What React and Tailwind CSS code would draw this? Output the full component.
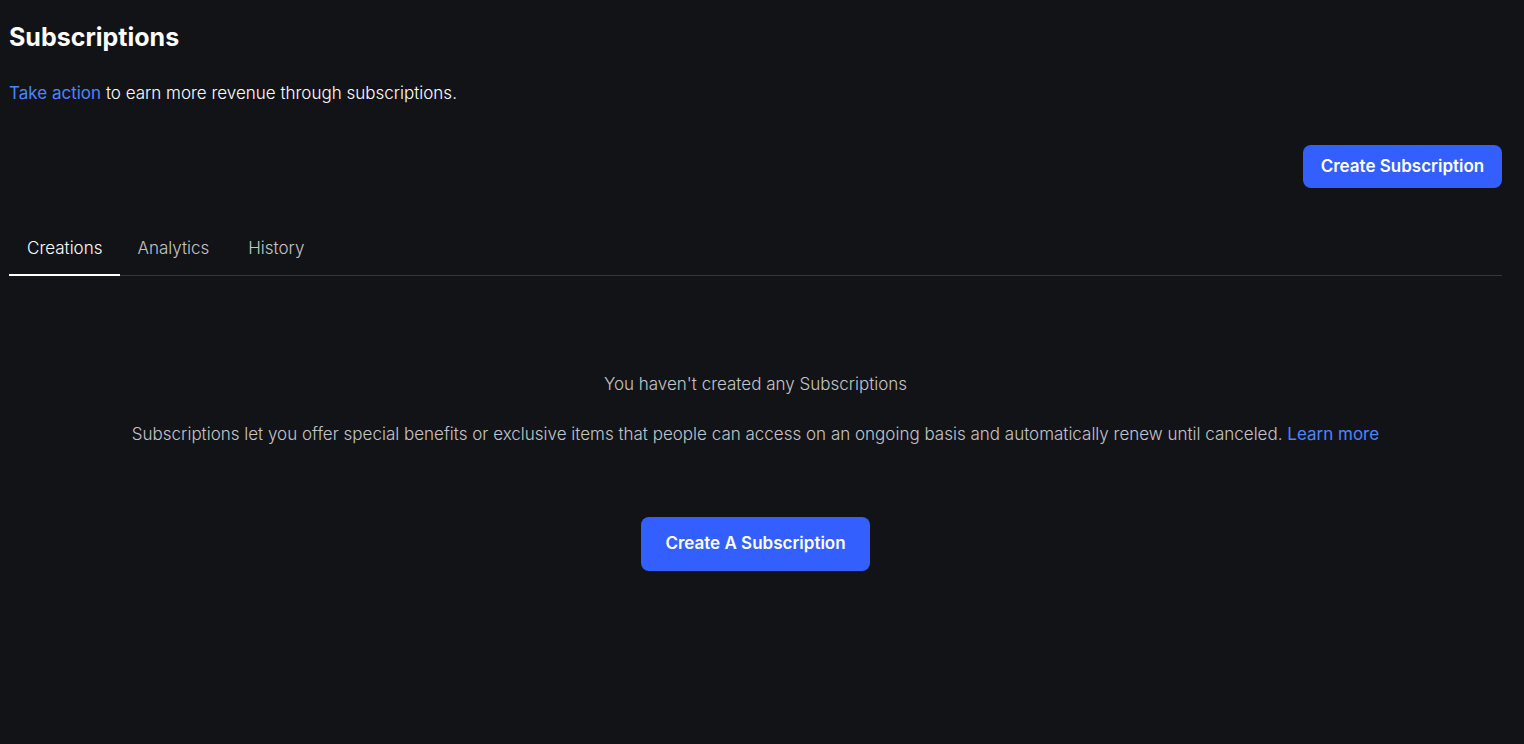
export default function App() {
  const font = { fontFamily: 'Inter, "Noto Sans", sans-serif' };
  return (
    <div className="min-h-[744px] w-full bg-[#121317] text-white" style={font}>
      <div className="pl-[9px] pr-[22px] pt-[21px]">
        <h1 className="text-[25px] leading-[32px] font-bold">Subscriptions</h1>
        <p className="mt-[28px] text-[17px] leading-[24px] font-light text-white">
          <a className="text-[#4a86ff] font-normal cursor-pointer">Take action</a> to earn more revenue through subscriptions.
        </p>
        <div className="mt-[40px] flex justify-end">
          <button className="h-[43px] w-[199px] rounded-[8px] bg-[#335fff] text-[17px] font-semibold text-white">
            Create Subscription
          </button>
        </div>
        <div className="mt-[48px] flex border-b border-[#34363b]">
          <div className="relative px-[18px] pb-[15px] text-[17px] leading-[24px] font-light text-white">
            Creations
            <span className="absolute left-0 right-0 -bottom-px h-[2px] bg-white" />
          </div>
          <div className="pl-[17px] pr-[19px] pb-[15px] text-[17px] leading-[24px] font-light text-[#c4c5c9]">Analytics</div>
          <div className="px-[20px] pb-[15px] text-[17px] leading-[24px] font-light text-[#c4c5c9]">History</div>
        </div>
        <div className="flex flex-col items-center pt-[96px]">
          <p className="text-[17px] leading-[24px] font-light text-[#c4c5c9]">You haven't created any Subscriptions</p>
          <p className="mt-[26px] text-[17px] leading-[24px] font-light text-[#c4c5c9]">
            Subscriptions let you offer special benefits or exclusive items that people can access on an ongoing basis and automatically renew until canceled.{' '}
            <a className="text-[#4a86ff] font-normal cursor-pointer">Learn more</a>
          </p>
          <button className="mt-[71px] h-[54px] w-[229px] rounded-[8px] bg-[#335fff] text-[17px] font-semibold text-white">
            Create A Subscription
          </button>
        </div>
      </div>
    </div>
  );
}
